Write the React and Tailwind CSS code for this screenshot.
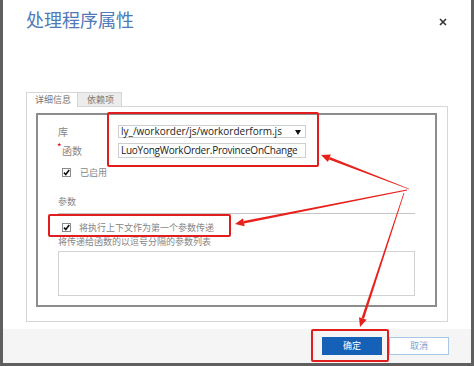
import React from "react";

function arrow(x0, y0, x1, y1, w0, w1, hl = 9, hw = 4) {
  const dx = x1 - x0, dy = y1 - y0;
  const len = Math.hypot(dx, dy);
  const ux = dx / len, uy = dy / len;
  const nx = -uy, ny = ux;
  const bx = x1 - ux * hl, by = y1 - uy * hl;
  const shaft = [
    [x0 + (nx * w0) / 2, y0 + (ny * w0) / 2],
    [bx + (nx * w1) / 2, by + (ny * w1) / 2],
    [bx - (nx * w1) / 2, by - (ny * w1) / 2],
    [x0 - (nx * w0) / 2, y0 - (ny * w0) / 2],
  ];
  const head = [
    [x1, y1],
    [bx + nx * hw, by + ny * hw],
    [bx - nx * hw, by - ny * hw],
  ];
  const s = (pts) => pts.map((p) => p[0].toFixed(2) + "," + p[1].toFixed(2)).join(" ");
  return { shaft: s(shaft), head: s(head) };
}

function Check() {
  return (
    <svg width="9" height="9" viewBox="0 0 9 9" className="shrink-0">
      <rect x="0.5" y="0.5" width="8" height="8" fill="white" stroke="#8a8a8a" />
      <path d="M2 4.6L3.8 6.6L7.2 2" stroke="#111" strokeWidth="1.6" fill="none" />
    </svg>
  );
}

export default function App() {
  const arrows = [
    arrow(409, 189, 321, 155, 0.8, 2.8),
    arrow(407, 190, 235, 224, 0.8, 2.4),
    arrow(404, 193, 360, 327, 0.8, 2.6),
  ];
  return (
    <div className="relative w-[474px] h-[366px] bg-[#5f5f5f] overflow-hidden font-['Noto_Sans_CJK_SC',sans-serif]">
      <div className="ml-[3px] w-[468px] h-[363px] bg-white flex flex-col">
        <div className="h-[92px] flex justify-between items-start pl-[23px] pr-[24px] pt-[8px]">
          <div className="text-[18px] leading-[22px] text-[#5079b6]">处理程序属性</div>
          <svg className="mt-[10px]" width="8" height="8" viewBox="0 0 8 8">
            <path d="M1 1L7 7M7 1L1 7" stroke="#333" strokeWidth="1.6" />
          </svg>
        </div>
        <div className="mx-[23px]">
          <div className="flex h-[15px] text-[9px] leading-[14px] text-[#777]">
            <div className="relative z-10 w-[52px] h-[15px] border border-b-0 border-[#d6d6d6] bg-white pl-[8px]">详细信息</div>
            <div className="w-[44px] h-[14px] border-t border-r border-[#d6d6d6] bg-[#ececec] pl-[9px]">依赖项</div>
          </div>
          <div className="h-[216px] border border-[#d6d6d6] -mt-px pt-[6px] pl-[9px] pr-[10px]">
            <div className="h-[194px] border-2 border-[#8d8d8d] px-[20px] pt-[10px] text-[#858585]">
              <div className="flex items-center h-[13px]">
                <div className="w-[60px] text-[10px] leading-[12px]">库</div>
                <div className="relative w-[188px] h-[13px] border border-[#cfcfcf] flex items-center pl-[2px] font-['Open_Sans',sans-serif] text-[10px] leading-[11px] text-[#222]">
                  ly_/workorder/js/workorderform.js
                  <svg className="absolute right-[4px] top-[4px]" width="6" height="5" viewBox="0 0 6 5">
                    <polygon points="0,0 6,0 3,5" fill="#111" />
                  </svg>
                </div>
              </div>
              <div className="flex items-center h-[15px] mt-[5px]">
                <div className="relative w-[60px] text-[10px] leading-[12px] pl-[4px]">
                  <span className="absolute left-[-1px] top-[-3px] text-[#d00] text-[10px] leading-[10px]">*</span>
                  <span>函数</span>
                </div>
                <div className="w-[188px] h-[15px] border border-[#cfcfcf] flex items-center pl-[2px] font-['Open_Sans',sans-serif] text-[10px] leading-[11px] tracking-[-0.25px] text-[#222]">
                  LuoYongWorkOrder.ProvinceOnChange
                </div>
              </div>
              <div className="flex items-center h-[9px] mt-[10px] pl-[4px] gap-[9px] text-[9px] leading-[12px]">
                <Check />
                <span>已启用</span>
              </div>
              <div className="mt-[19px] h-[12px] text-[9px] leading-[12px]">参数</div>
              <div className="mt-[5px] h-px bg-[#c4c4c4]"></div>
              <div className="flex items-center h-[9px] mt-[9px] pl-[4px] gap-[8px] text-[9px] leading-[12px]">
                <Check />
                <span>将执行上下文作为第一个参数传递</span>
              </div>
              <div className="mt-[4px] h-[12px] text-[9px] leading-[12px]">将传递给函数的以逗号分隔的参数列表</div>
              <div className="mt-[3px] h-[45px] border border-[#d2d2d2]"></div>
            </div>
          </div>
        </div>
        <div className="mt-[7px] flex-1 bg-[#f5f5f5] flex justify-end items-start pt-[8px] pr-[22px] gap-[7px]">
          <div className="w-[60px] h-[18px] bg-[#1561b8] text-white text-[9px] leading-[18px] text-center">确定</div>
          <div className="w-[60px] h-[18px] border border-[#a9c7e6] bg-white text-[#7aa3d3] text-[9px] leading-[16px] text-center">取消</div>
        </div>
      </div>

      <div className="absolute left-[107px] top-[112px] w-[212px] h-[55px] border-2 border-[#e21d1d] rounded-[2px]"></div>
      <div className="absolute left-[48px] top-[214px] w-[183px] h-[23px] border-2 border-[#e21d1d] rounded-[2px]"></div>
      <div className="absolute left-[311px] top-[329px] w-[78px] h-[33px] border-2 border-[#e21d1d] rounded-[2px]"></div>

      <svg className="absolute inset-0 pointer-events-none" width="474" height="366" viewBox="0 0 474 366">
        {arrows.map((a, i) => (
          <g key={i} fill="#e8201c">
            <polygon points={a.shaft} />
            <polygon points={a.head} />
          </g>
        ))}
      </svg>
    </div>
  );
}
